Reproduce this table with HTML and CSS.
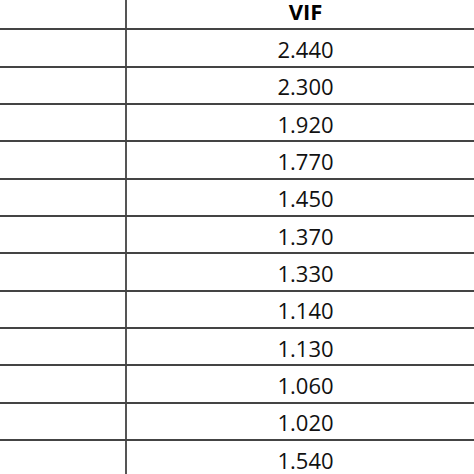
FILE: index.html
```html
<!DOCTYPE html>
<html>
<head>
<meta charset="utf-8">
<link rel="stylesheet" href="styles.css">
</head>
<body>
<div class="frame">
  <div class="table">
    <div class="row head"><div class="c1"></div><div class="c2"><span class="title">VIF</span></div></div>
    <div class="row"><div class="c1"></div><div class="c2">2.440</div></div>
    <div class="row"><div class="c1"></div><div class="c2">2.300</div></div>
    <div class="row"><div class="c1"></div><div class="c2">1.920</div></div>
    <div class="row"><div class="c1"></div><div class="c2">1.770</div></div>
    <div class="row"><div class="c1"></div><div class="c2">1.450</div></div>
    <div class="row"><div class="c1"></div><div class="c2">1.370</div></div>
    <div class="row"><div class="c1"></div><div class="c2">1.330</div></div>
    <div class="row"><div class="c1"></div><div class="c2">1.140</div></div>
    <div class="row"><div class="c1"></div><div class="c2">1.130</div></div>
    <div class="row"><div class="c1"></div><div class="c2">1.060</div></div>
    <div class="row"><div class="c1"></div><div class="c2">1.020</div></div>
    <div class="row"><div class="c1"></div><div class="c2">1.540</div></div>
  </div>
</div>
</body>
</html>
```
FILE: styles.css
```css
html, body {
  margin: 0;
  padding: 0;
  background: #fff;
}
.frame {
  width: 474px;
  height: 474px;
  overflow: hidden;
  background: #fff;
}
.table {
  margin-left: -20px;
  margin-top: -7px;
  width: 504px;
  display: flex;
  flex-direction: column;
  font-family: "Open Sans", "Noto Sans", sans-serif;
  color: #111;
}
.row {
  display: grid;
  grid-template-columns: 147px 357px;
  height: 37.33px;
  box-sizing: border-box;
  border-bottom: 2px solid #444;
}
.c1 {
  border-right: 2px solid #555;
}
.c2 {
  display: flex;
  align-items: center;
  justify-content: center;
  font-size: 22px;
  line-height: 1;
  padding-top: 2px;
}
.head .c2 {
  align-items: flex-end;
  padding-bottom: 6px;
}
.title {
  font-weight: 700;
  font-size: 22px;
  line-height: 22px;
  color: #000;
}
```
